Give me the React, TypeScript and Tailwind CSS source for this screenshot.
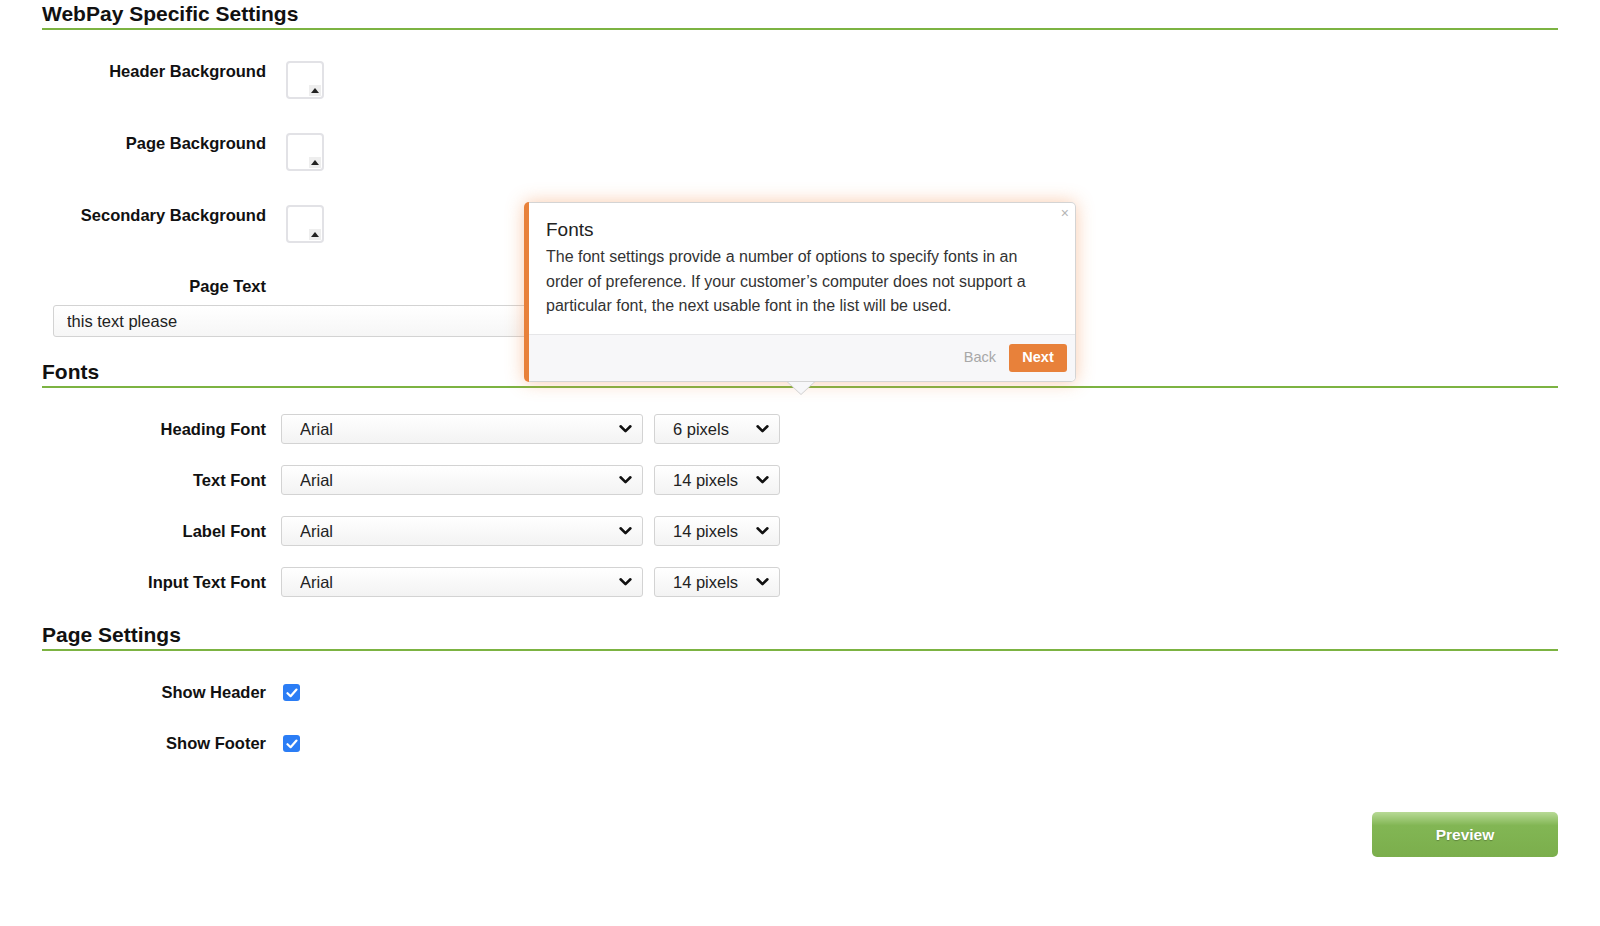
import React from 'react';

const fontFamily = { fontFamily: '"Liberation Sans", Arial, Helvetica, sans-serif' };

const Chevron = () => (
  <svg className="pointer-events-none absolute right-[11px] top-1/2 -translate-y-1/2" width="13" height="9" viewBox="0 0 13 9">
    <path d="M1.6 1.8 L6.5 6.6 L11.4 1.8" fill="none" stroke="#111" strokeWidth="2.6" strokeLinecap="round" strokeLinejoin="round" />
  </svg>
);

const Select = ({ value, width }: { value: string; width: string }) => (
  <div className={`relative h-[30px] ${width}`}>
    <select
      defaultValue={value}
      className="h-full w-full appearance-none rounded-[3px] border border-[#d3d3d3] bg-[linear-gradient(#ffffff,#f3f3f3)] pl-[18px] text-[16.5px] text-[#222] outline-none"
      style={fontFamily}
    >
      <option>{value}</option>
    </select>
    <Chevron />
  </div>
);

const Swatch = () => (
  <div className="relative h-[38px] w-[38px] rounded-[4px] border-2 border-[#e2e2e6] bg-white">
    <div className="absolute bottom-[1px] right-[1px] flex h-[11px] w-[12px] items-center justify-center bg-[#eeeeee]">
      <div className="h-0 w-0 border-x-[4px] border-b-[5px] border-x-transparent border-b-[#222]" />
    </div>
  </div>
);

const Checkbox = () => (
  <div className="flex h-[17px] w-[17px] items-center justify-center rounded-[3px] bg-[#2b7df5]">
    <svg width="12" height="10" viewBox="0 0 12 10">
      <path d="M1.5 5.2 L4.6 8.2 L10.5 1.6" fill="none" stroke="white" strokeWidth="2.2" strokeLinecap="round" strokeLinejoin="round" />
    </svg>
  </div>
);

const Heading = ({ title, className }: { title: string; className?: string }) => (
  <h2 className={`border-b-2 border-[#7cb342] pb-[1px] text-[21px] font-bold leading-[26px] text-[#111] ${className ?? ''}`}>
    {title}
  </h2>
);

const Label = ({ text }: { text: string }) => (
  <div className="w-[224px] shrink-0 text-right text-[16.5px] font-bold leading-[19px] text-[#111]">{text}</div>
);

export default function App() {
  const colors = ['Header Background', 'Page Background', 'Secondary Background'];
  const fonts = [
    { label: 'Heading Font', size: '6 pixels' },
    { label: 'Text Font', size: '14 pixels' },
    { label: 'Label Font', size: '14 pixels' },
    { label: 'Input Text Font', size: '14 pixels' },
  ];

  return (
    <div className="relative min-h-[926px] w-[1600px] bg-white" style={fontFamily}>
      <div className="ml-[42px] w-[1516px] pt-[1px]">
        <Heading title="WebPay Specific Settings" />

        <div className="mt-[31px] flex flex-col gap-[34px]">
          {colors.map((c) => (
            <div key={c} className="flex items-start">
              <div className="pt-[1px]">
                <Label text={c} />
              </div>
              <div className="ml-[20px]">
                <Swatch />
              </div>
            </div>
          ))}
        </div>

        <div className="mt-[34px]">
          <Label text="Page Text" />
        </div>
        <input
          defaultValue="this text please"
          className="ml-[11px] mt-[9px] h-[32px] w-[730px] rounded-[3px] border border-[#d3d3d3] bg-[linear-gradient(#ffffff,#f6f6f6)] px-[13px] text-[16.5px] text-[#222] outline-none"
          style={fontFamily}
        />

        <Heading title="Fonts" className="mt-[22px]" />

        <div className="mt-[26px] flex flex-col gap-[21px]">
          {fonts.map((f) => (
            <div key={f.label} className="flex items-center">
              <Label text={f.label} />
              <div className="ml-[15px] flex gap-[11px]">
                <Select value="Arial" width="w-[362px]" />
                <Select value={f.size} width="w-[126px]" />
              </div>
            </div>
          ))}
        </div>

        <Heading title="Page Settings" className="mt-[25px]" />

        <div className="mt-[32px] flex flex-col gap-[32px]">
          {['Show Header', 'Show Footer'].map((s) => (
            <div key={s} className="flex items-center">
              <Label text={s} />
              <div className="ml-[17px]">
                <Checkbox />
              </div>
            </div>
          ))}
        </div>

        <div className="mt-[59px] flex justify-end">
          <button className="h-[45px] w-[186px] rounded-[5px] bg-[linear-gradient(#b8da96,#82b654_30%,#7bae4c)] text-[15.5px] font-bold text-white [text-shadow:0_1px_1px_rgba(0,0,0,0.25)]">
            Preview
          </button>
        </div>
      </div>

      {/* tour popover */}
      <div className="absolute left-[524px] top-[202px] w-[552px] rounded-[5px] border-l-[5px] border-[#e8813a] bg-white shadow-[0_0_18px_rgba(240,130,60,0.42)]">
        <div className="relative rounded-r-[5px] border border-l-0 border-[#d4d4d4]">
          <span className="absolute right-[6px] top-[2px] text-[14px] leading-[16px] text-[#b5b5b5]">×</span>
          <div className="pb-[15px] pl-[17px] pr-[18px] pt-[14px]">
            <div className="text-[19px] leading-[26px] text-[#222]">Fonts</div>
            <p className="mt-[2px] text-[16px] leading-[24.5px] text-[#333]">
              The font settings provide a number of options to specify fonts in an order of preference. If your customer’s computer does not support a particular font, the next usable font in the list will be used.
            </p>
          </div>
          <div className="flex items-center justify-end gap-[13px] rounded-br-[5px] border-t border-[#e6e6e8] bg-[#f7f7f9] py-[9px] pr-[8px]">
            <span className="text-[14.5px] text-[#a8a8a8]">Back</span>
            <button className="h-[28px] w-[58px] rounded-[3px] bg-[#e8813a] text-[14.5px] font-bold text-white">Next</button>
          </div>
        </div>
        <div className="absolute left-[258px] top-full h-0 w-0 border-x-[14px] border-t-[13px] border-x-transparent border-t-[#cfcfcf]" />
        <div className="absolute left-[259px] top-full h-0 w-0 border-x-[13px] border-t-[12px] border-x-transparent border-t-[#f7f7f9]" />
      </div>
    </div>
  );
}
